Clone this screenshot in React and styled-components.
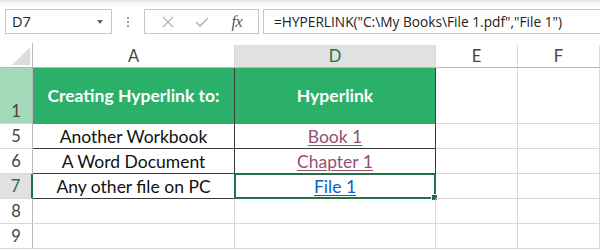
import React from "react";
import styled, { createGlobalStyle, css } from "styled-components";

const Global = createGlobalStyle`
  html, body { margin: 0; padding: 0; background: #fff; }
  body { width: 600px; height: 250px; overflow: hidden; font-family: Lato, "Liberation Sans", sans-serif; }
`;

const Page = styled.div`
  width: 600px;
  height: 250px;
  overflow: hidden;
  background: #fff;
`;

const Toolbar = styled.div`
  height: 43px;
  box-sizing: border-box;
  padding-top: 9px;
  display: flex;
  align-items: flex-start;
  background: linear-gradient(#e4e4e4 0px, #f6f6f6 3px, #fff 7px);
`;

const NameBox = styled.div`
  margin-left: 5px;
  width: 107px;
  height: 25px;
  box-sizing: border-box;
  border: 1px solid #c6c6c6;
  background: #fff;
  display: flex;
  align-items: center;
  justify-content: space-between;
  padding: 0 8px 0 6px;
  font-family: "Open Sans", sans-serif;
  font-size: 14.5px;
  color: #222;
`;

const Caret = styled.span`
  width: 0;
  height: 0;
  border-left: 3.5px solid transparent;
  border-right: 3.5px solid transparent;
  border-top: 4px solid #666;
`;

const Dots = styled.div`
  width: 32px;
  height: 25px;
  display: flex;
  flex-direction: column;
  align-items: center;
  justify-content: center;
  gap: 2px;
  span {
    width: 2px;
    height: 2px;
    background: #9a9a9a;
  }
`;

const ButtonBox = styled.div`
  width: 115px;
  height: 25px;
  box-sizing: border-box;
  border: 1px solid #c6c6c6;
  background: #fff;
  display: flex;
  align-items: center;
  justify-content: space-around;
  padding: 0 4px 0 6px;
`;

const IconSlot = styled.span`
  width: 24px;
  display: flex;
  align-items: center;
  justify-content: center;
  color: #555;
`;

const Fx = styled.span`
  font-family: "Liberation Serif", serif;
  font-style: italic;
  font-size: 16px;
  color: #555;
  letter-spacing: -0.5px;
`;

const FormulaBox = styled.div`
  margin-left: 4px;
  flex: 1;
  height: 25px;
  box-sizing: border-box;
  border: 1px solid #c6c6c6;
  border-right: none;
  background: #fff;
  display: flex;
  align-items: center;
  padding-left: 10px;
  font-family: "Open Sans", sans-serif;
  font-size: 13.7px;
  color: #222;
  white-space: nowrap;
`;

const Sheet = styled.div`
  display: grid;
  grid-template-columns: 33px 202px 201px 82px 82px;
  grid-template-rows: 25px 56px 25px 25px 25px 25px 25px;
  font-family: Lato, "Liberation Sans", sans-serif;
`;

const GRID = "#d9d9d9";
const DARK = "#3b3b3b";
const SEL = "#217346";

const Corner = styled.div`
  border-right: 1px solid #b8b8b8;
  border-bottom: 1px solid #b8b8b8;
  display: flex;
  align-items: flex-end;
  justify-content: flex-end;
  padding: 0 2px 2px 0;
  box-sizing: border-box;
`;

const ColHead = styled.div`
  box-sizing: border-box;
  margin-top: 2px;
  border-right: 1px solid ${GRID};
  border-bottom: 1px solid #b8b8b8;
  background: ${(p) => (p.$active ? "#e1e1e1" : "#fff")};
  color: ${(p) => (p.$active ? SEL : "#444")};
  display: flex;
  align-items: center;
  justify-content: center;
  font-size: 16.5px;
`;

const RowHead = styled.div`
  box-sizing: border-box;
  border-right: ${(p) => (p.$active ? `2px solid ${SEL}` : "1px solid #b8b8b8")};
  border-bottom: 1px solid ${GRID};
  background: ${(p) => p.$bg || "#fff"};
  color: ${(p) => (p.$active ? SEL : "#444")};
  display: flex;
  align-items: flex-end;
  justify-content: center;
  padding-bottom: 1px;
  font-size: 16.5px;
  line-height: 21px;
`;

const Cell = styled.div`
  box-sizing: border-box;
  position: relative;
  border-right: 1px solid ${GRID};
  border-bottom: 1px solid ${GRID};
  display: flex;
  align-items: flex-end;
  justify-content: center;
  padding-bottom: 0;
  font-size: 17.5px;
  line-height: 22px;
  color: #111;
  white-space: nowrap;
  ${(p) =>
    p.$table &&
    css`
      border-right-color: ${DARK};
      border-bottom-color: ${DARK};
    `}
  ${(p) =>
    p.$head &&
    css`
      background: #2bb06a;
      color: #fff;
      font-weight: 700;
      align-items: center;
      padding-bottom: 0;
      border-bottom-color: #2bb06a;
    `}
`;

const Link = styled.span`
  color: ${(p) => (p.$visited ? "#954f72" : "#0563c1")};
  text-decoration: underline;
  text-underline-offset: 2px;
  text-decoration-thickness: 1px;
`;

const Selection = styled.div`
  position: absolute;
  left: -1px;
  top: -1px;
  right: -1px;
  bottom: -1px;
  border: 2px solid ${SEL};
  pointer-events: none;
`;

const Handle = styled.div`
  position: absolute;
  right: -4px;
  bottom: -4px;
  width: 5px;
  height: 5px;
  background: ${SEL};
  border: 1px solid #fff;
`;

const rows = [
  { n: 5, a: "Another Workbook", d: "Book 1", visited: true },
  { n: 6, a: "A Word Document", d: "Chapter 1", visited: true },
  { n: 7, a: "Any other file on PC", d: "File 1", visited: false, selected: true },
];

export default function App() {
  return (
    <Page>
      <Global />
      <Toolbar>
        <NameBox>
          D7
          <Caret />
        </NameBox>
        <Dots>
          <span />
          <span />
          <span />
        </Dots>
        <ButtonBox>
          <IconSlot>
            <svg width="12" height="12" viewBox="0 0 12 12">
              <path d="M1 1 L11 11 M11 1 L1 11" stroke="#b5b5b5" strokeWidth="1.3" fill="none" />
            </svg>
          </IconSlot>
          <IconSlot>
            <svg width="14" height="12" viewBox="0 0 14 12">
              <path d="M1 6 L5 10 L13 2" stroke="#b5b5b5" strokeWidth="1.6" fill="none" />
            </svg>
          </IconSlot>
          <IconSlot>
            <Fx>fx</Fx>
          </IconSlot>
        </ButtonBox>
        <FormulaBox>=HYPERLINK("C:\My Books\File 1.pdf","File 1")</FormulaBox>
      </Toolbar>
      <Sheet>
        <Corner>
          <svg width="18" height="18" viewBox="0 0 18 18">
            <polygon points="18,0 18,18 0,18" fill="#dcdcdc" />
          </svg>
        </Corner>
        <ColHead>A</ColHead>
        <ColHead $active>D</ColHead>
        <ColHead>E</ColHead>
        <ColHead>F</ColHead>

        <RowHead $bg="#a3d8b9">1</RowHead>
        <Cell $table $head>Creating Hyperlink to:</Cell>
        <Cell $table $head>Hyperlink</Cell>
        <Cell />
        <Cell />

        {rows.map((r) => (
          <React.Fragment key={r.n}>
            <RowHead $active={r.selected} $bg={r.selected ? "#e1e1e1" : undefined}>
              {r.n}
            </RowHead>
            <Cell $table>{r.a}</Cell>
            <Cell $table>
              <Link $visited={r.visited}>{r.d}</Link>
              {r.selected && (
                <Selection>
                  <Handle />
                </Selection>
              )}
            </Cell>
            <Cell />
            <Cell />
          </React.Fragment>
        ))}

        {[8, 9].map((n) => (
          <React.Fragment key={n}>
            <RowHead>{n}</RowHead>
            <Cell />
            <Cell />
            <Cell />
            <Cell />
          </React.Fragment>
        ))}
      </Sheet>
    </Page>
  );
}
